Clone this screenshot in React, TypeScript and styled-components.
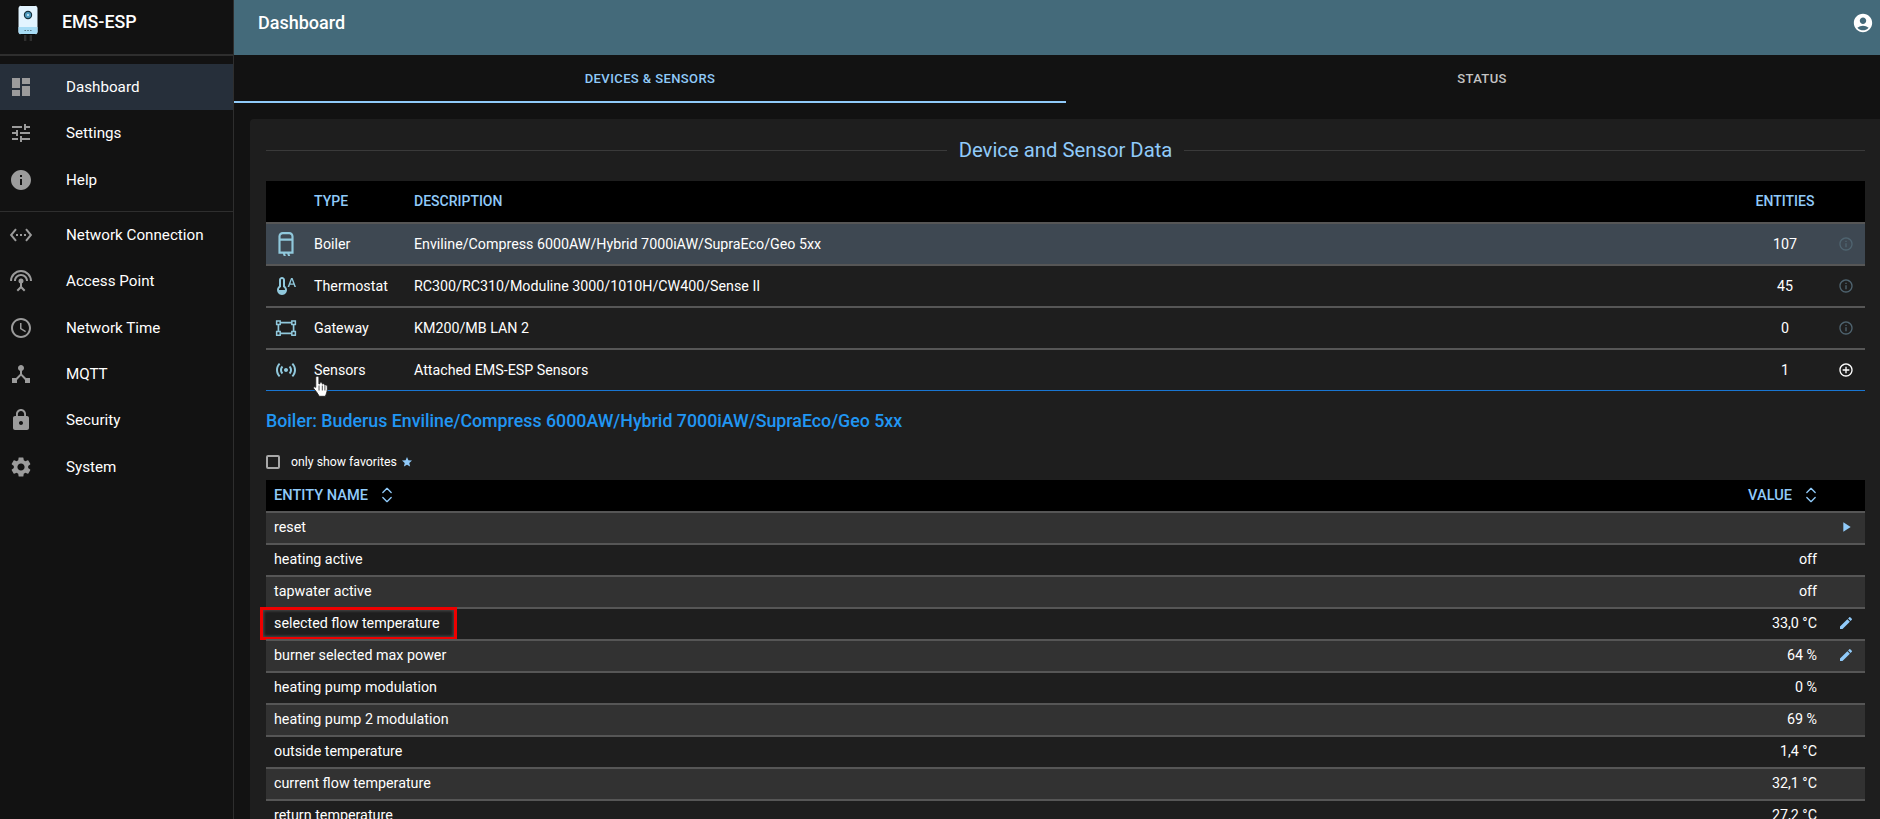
import React from 'react';
import styled, { createGlobalStyle } from 'styled-components';
import {
  MdDashboard, MdTune, MdInfo, MdSettingsEthernet, MdSettingsInputAntenna, MdAccessTime,
  MdDeviceHub, MdLock, MdSettings, MdAccountCircle, MdInfoOutline, MdAddCircleOutline,
  MdPlayArrow, MdEdit, MdThermostatAuto, MdOutlineSensors, MdStar,
} from 'react-icons/md';
import { CgSmartHomeBoiler } from 'react-icons/cg';
import { AiOutlineGateway } from 'react-icons/ai';
import { ChevronsUpDown } from 'lucide-react';

const Global = createGlobalStyle`
  html, body { margin: 0; padding: 0; height: 100%; overflow: hidden; background: #121212; }
  body { font-family: Roboto, "Liberation Sans", sans-serif; color: #fff; }
  #root { height: 100%; }
`;

const Page = styled.div`
  display: flex;
  width: 1880px;
  height: 819px;
  overflow: hidden;
  background: #121212;
`;

const Sidebar = styled.aside`
  flex: 0 0 234px;
  box-sizing: border-box;
  border-right: 1px solid #2e2e2e;
  display: flex;
  flex-direction: column;
`;

const Brand = styled.div`
  height: 54px;
  flex: none;
  box-sizing: content-box;
  display: flex;
  align-items: flex-start;
  padding-left: 17px;
  border-bottom: 2px solid #2e2e2e;
`;

const BrandLogo = styled.svg`
  margin-top: 5px;
  flex: none;
`;

const BrandName = styled.div`
  margin-left: 23px;
  margin-top: 5px;
  line-height: 34px;
  font-size: 17.8px;
  font-weight: 500;
`;

const NavList = styled.nav<{ $top?: number }>`
  display: flex;
  flex-direction: column;
  padding-top: ${(p) => p.$top ?? 0}px;
`;

const NavItem = styled.div<{ $active?: boolean }>`
  height: 46.3px;
  display: flex;
  align-items: center;
  padding-left: 9px;
  gap: 33px;
  font-size: 15.2px;
  background: ${(p) => (p.$active ? '#262f3a' : 'transparent')};
  svg { color: #9b9b9b; flex: none; }
`;

const NavDivider = styled.hr`
  border: 0;
  height: 1px;
  background: #2e2e2e;
  margin: 8px 0 0;
`;

const Main = styled.main`
  flex: 1;
  min-width: 0;
  display: flex;
  flex-direction: column;
`;

const AppBar = styled.header`
  height: 55px;
  flex: none;
  box-sizing: border-box;
  background: #446a7a;
  display: flex;
  align-items: center;
  justify-content: space-between;
  padding: 0 6px 10px 24px;
  font-size: 18px;
  font-weight: 500;
`;

const Tabs = styled.div`
  display: flex;
  height: 48px;
  flex: none;
`;

const Tab = styled.div<{ $active?: boolean }>`
  flex: 0 0 832px;
  box-sizing: border-box;
  display: flex;
  align-items: center;
  justify-content: center;
  font-size: 13px;
  font-weight: 500;
  letter-spacing: 0.4px;
  color: ${(p) => (p.$active ? '#90caf9' : '#c4c4c4')};
  border-bottom: 2px solid ${(p) => (p.$active ? '#90caf9' : 'transparent')};
`;

const Panel = styled.section`
  margin: 16px 0 0 16px;
  flex: 1;
  background: #1e1e1e;
  border-radius: 4px 0 0 0;
  padding: 0 15px 0 16px;
`;

const PanelTitle = styled.div`
  height: 62px;
  display: flex;
  align-items: center;
  gap: 12px;
  font-size: 20.3px;
  color: #90caf9;
  &::before, &::after {
    content: '';
    flex: 1;
    height: 1px;
    background: #3a3a3a;
  }
`;

const DeviceHead = styled.div`
  display: grid;
  grid-template-columns: 48px 100px 1fr 80px 40px;
  align-items: center;
  box-sizing: border-box;
  height: 41px;
  padding-bottom: 1px;
  background: #000;
  color: #90caf9;
  font-size: 14px;
  font-weight: 500;
`;

const DeviceRow = styled.div<{ $selected?: boolean; $blue?: boolean }>`
  display: grid;
  grid-template-columns: 48px 100px 1fr 80px 40px;
  align-items: center;
  box-sizing: border-box;
  height: 42px;
  font-size: 14.25px;
  border-top: 2px solid #565656;
  ${(p) => p.$blue && 'border-image: linear-gradient(#565656 50%, #1f6fb5 50%) 2 0 0 0;'}
  background: ${(p) => (p.$selected ? '#3e4852' : 'transparent')};
`;

const DeviceIcon = styled.div`
  display: flex;
  justify-content: center;
  padding-right: 8px;
  color: #90c8dc;
`;

const CountCell = styled.div`
  text-align: center;
`;

const ActionCell = styled.div<{ $color?: string }>`
  display: flex;
  justify-content: center;
  padding-left: 2px;
  color: ${(p) => p.$color ?? '#90caf9'};
`;

const EndLine = styled.div`
  position: relative;
  height: 1px;
  background: #1976d2;
`;

const Cursor = styled.svg`
  position: absolute;
  left: 46px;
  top: -15px;
  z-index: 2;
`;

const BoilerTitle = styled.h2`
  margin: 0;
  height: 59px;
  display: flex;
  align-items: center;
  font-size: 17.8px;
  font-weight: 500;
  color: #2196f3;
`;

const FavRow = styled.label`
  height: 30px;
  box-sizing: border-box;
  padding-bottom: 7px;
  display: flex;
  align-items: center;
  font-size: 12.3px;
  svg { color: #90caf9; margin-left: 4px; }
`;

const CheckBox = styled.span`
  width: 10px;
  height: 10px;
  border: 2px solid #a8a8a8;
  border-radius: 2px;
  margin-right: 11px;
`;

const EntityHead = styled.div`
  display: grid;
  grid-template-columns: 1fr 160px 40px;
  align-items: center;
  box-sizing: border-box;
  height: 31px;
  padding-bottom: 2px;
  background: #000;
  color: #90caf9;
  font-size: 14.6px;
  font-weight: 500;
`;

const SortLabel = styled.div<{ $end?: boolean }>`
  display: flex;
  align-items: center;
  justify-content: ${(p) => (p.$end ? 'flex-end' : 'flex-start')};
  gap: 9px;
  padding-left: 8px;
  margin-right: ${(p) => (p.$end ? '4px' : '0')};
`;

const EntityRow = styled.div<{ $odd: boolean }>`
  position: relative;
  display: grid;
  grid-template-columns: 1fr 160px 40px;
  align-items: center;
  box-sizing: border-box;
  height: 32px;
  padding-bottom: 2px;
  font-size: 14.3px;
  border-top: 2px solid #565656;
  background: ${(p) => (p.$odd ? '#323232' : '#1e1e1e')};
`;

const EntityName = styled.div`
  padding-left: 8px;
`;

const EntityValue = styled.div`
  text-align: right;
  padding-right: 8px;
`;

const Highlight = styled.div`
  position: absolute;
  left: -6px;
  top: -2px;
  width: 197px;
  height: 33px;
  box-sizing: border-box;
  border: 3px solid #ee0000;
  box-shadow: inset 0 0 3px 1px #4a4a4a;
  pointer-events: none;
`;

const BoilerLogo = () => (
  <BrandLogo width="22" height="37" viewBox="0 0 22 37">
    <rect x="7" y="29" width="2.4" height="7" fill="#2f2f2f" />
    <rect x="12.6" y="29" width="2.4" height="7" fill="#2f2f2f" />
    <rect x="1" y="0.5" width="20" height="29" rx="2.5" fill="#e2f4ff" stroke="#0a0a0a" />
    <path d="M1.5 22h19v5a2 2 0 0 1-2 2H3.500a2 2 0 0 1-2-2z" fill="#a7dcf5" />
    <circle cx="11" cy="10" r="3.6" fill="#4f9cc0" stroke="#17323e" strokeWidth="1.2" />
    <circle cx="11" cy="10" r="1" fill="#d5eefb" />
    <rect x="7.500" y="25" width="1.400" height="1" fill="#56707c" />
    <rect x="10.300" y="25" width="1.400" height="1" fill="#56707c" />
    <rect x="13.100" y="25" width="1.400" height="1" fill="#56707c" />
  </BrandLogo>
);

const HandCursor = () => (
  <Cursor width="17" height="22" viewBox="0 0 14.5 22" preserveAspectRatio="none">
    <path
      d="M4.5 1.2c.8 0 1.4.6 1.4 1.5v6.2l.8-.1V7.6c1-.7 1.9-.4 2 .7v.8c1-.7 1.9-.4 2.1.6v.6c1-.6 2-.3 2.2.8.3 2 .2 4-.3 5.8-.4 1.6-.8 3-1.3 4.4H6.2C5 18.5 3.3 16.2 1.5 13.6c-.8-1.3.6-2.4 1.5-1.4l.2.2V2.7c0-.9.5-1.5 1.3-1.5z"
      fill="#fff"
      stroke="#222"
      strokeWidth="0.8"
    />
    <path d="M6 10.5v5M8.8 10.5v5M11 11v4.5" stroke="#333" strokeWidth="0.8" fill="none" />
  </Cursor>
);

const mainNav = [
  { label: 'Dashboard', Icon: MdDashboard, active: true },
  { label: 'Settings', Icon: MdTune },
  { label: 'Help', Icon: MdInfo },
];

const projectNav = [
  { label: 'Network Connection', Icon: MdSettingsEthernet },
  { label: 'Access Point', Icon: MdSettingsInputAntenna },
  { label: 'Network Time', Icon: MdAccessTime },
  { label: 'MQTT', Icon: MdDeviceHub },
  { label: 'Security', Icon: MdLock },
  { label: 'System', Icon: MdSettings },
];

const devices = [
  { type: 'Boiler', desc: 'Enviline/Compress 6000AW/Hybrid 7000iAW/SupraEco/Geo 5xx', count: 107, Icon: CgSmartHomeBoiler, size: 26, selected: true },
  { type: 'Thermostat', desc: 'RC300/RC310/Moduline 3000/1010H/CW400/Sense II', count: 45, Icon: MdThermostatAuto, size: 24 },
  { type: 'Gateway', desc: 'KM200/MB LAN 2', count: 0, Icon: AiOutlineGateway, size: 24 },
  { type: 'Sensors', desc: 'Attached EMS-ESP Sensors', count: 1, Icon: MdOutlineSensors, size: 24, blue: true, add: true },
];

const entities: { name: string; value: string; action?: 'play' | 'edit'; mark?: boolean }[] = [
  { name: 'reset', value: '', action: 'play' },
  { name: 'heating active', value: 'off' },
  { name: 'tapwater active', value: 'off' },
  { name: 'selected flow temperature', value: '33,0 °C', action: 'edit', mark: true },
  { name: 'burner selected max power', value: '64 %', action: 'edit' },
  { name: 'heating pump modulation', value: '0 %' },
  { name: 'heating pump 2 modulation', value: '69 %' },
  { name: 'outside temperature', value: '1,4 °C' },
  { name: 'current flow temperature', value: '32,1 °C' },
  { name: 'return temperature', value: '27,2 °C' },
];

export default function App() {
  return (
    <Page>
      <Global />
      <Sidebar>
        <Brand>
          <BoilerLogo />
          <BrandName>EMS-ESP</BrandName>
        </Brand>
        <NavList $top={8}>
          {mainNav.map(({ label, Icon, active }) => (
            <NavItem key={label} $active={active}>
              <Icon size={24} />
              {label}
            </NavItem>
          ))}
        </NavList>
        <NavDivider />
        <NavList>
          {projectNav.map(({ label, Icon }) => (
            <NavItem key={label}>
              <Icon size={24} />
              {label}
            </NavItem>
          ))}
        </NavList>
      </Sidebar>
      <Main>
        <AppBar>
          Dashboard
          <MdAccountCircle size={22} />
        </AppBar>
        <Tabs>
          <Tab $active>DEVICES &amp; SENSORS</Tab>
          <Tab>STATUS</Tab>
        </Tabs>
        <Panel>
          <PanelTitle>Device and Sensor Data</PanelTitle>
          <DeviceHead>
            <span />
            <span>TYPE</span>
            <span>DESCRIPTION</span>
            <CountCell>ENTITIES</CountCell>
            <span />
          </DeviceHead>
          {devices.map(({ type, desc, count, Icon, size, selected, blue, add }) => (
            <DeviceRow key={type} $selected={selected} $blue={blue}>
              <DeviceIcon><Icon size={size} /></DeviceIcon>
              <span>{type}</span>
              <span>{desc}</span>
              <CountCell>{count}</CountCell>
              {add ? (
                <ActionCell $color="#fff"><MdAddCircleOutline size={16} /></ActionCell>
              ) : (
                <ActionCell $color="#4f6470"><MdInfoOutline size={16} /></ActionCell>
              )}
            </DeviceRow>
          ))}
          <EndLine><HandCursor /></EndLine>
          <BoilerTitle>Boiler: Buderus Enviline/Compress 6000AW/Hybrid 7000iAW/SupraEco/Geo 5xx</BoilerTitle>
          <FavRow>
            <CheckBox />
            only show favorites
            <MdStar size={12} />
          </FavRow>
          <EntityHead>
            <SortLabel>ENTITY NAME <ChevronsUpDown size={20} strokeWidth={1.6} /></SortLabel>
            <SortLabel $end>VALUE <ChevronsUpDown size={20} strokeWidth={1.6} /></SortLabel>
            <span />
          </EntityHead>
          {entities.map(({ name, value, action, mark }, i) => (
            <EntityRow key={name} $odd={i % 2 === 0}>
              <EntityName>{name}</EntityName>
              <EntityValue>{value}</EntityValue>
              <ActionCell>
                {action === 'play' && <MdPlayArrow size={16} />}
                {action === 'edit' && <MdEdit size={16} />}
              </ActionCell>
              {mark && <Highlight />}
            </EntityRow>
          ))}
        </Panel>
      </Main>
    </Page>
  );
}
